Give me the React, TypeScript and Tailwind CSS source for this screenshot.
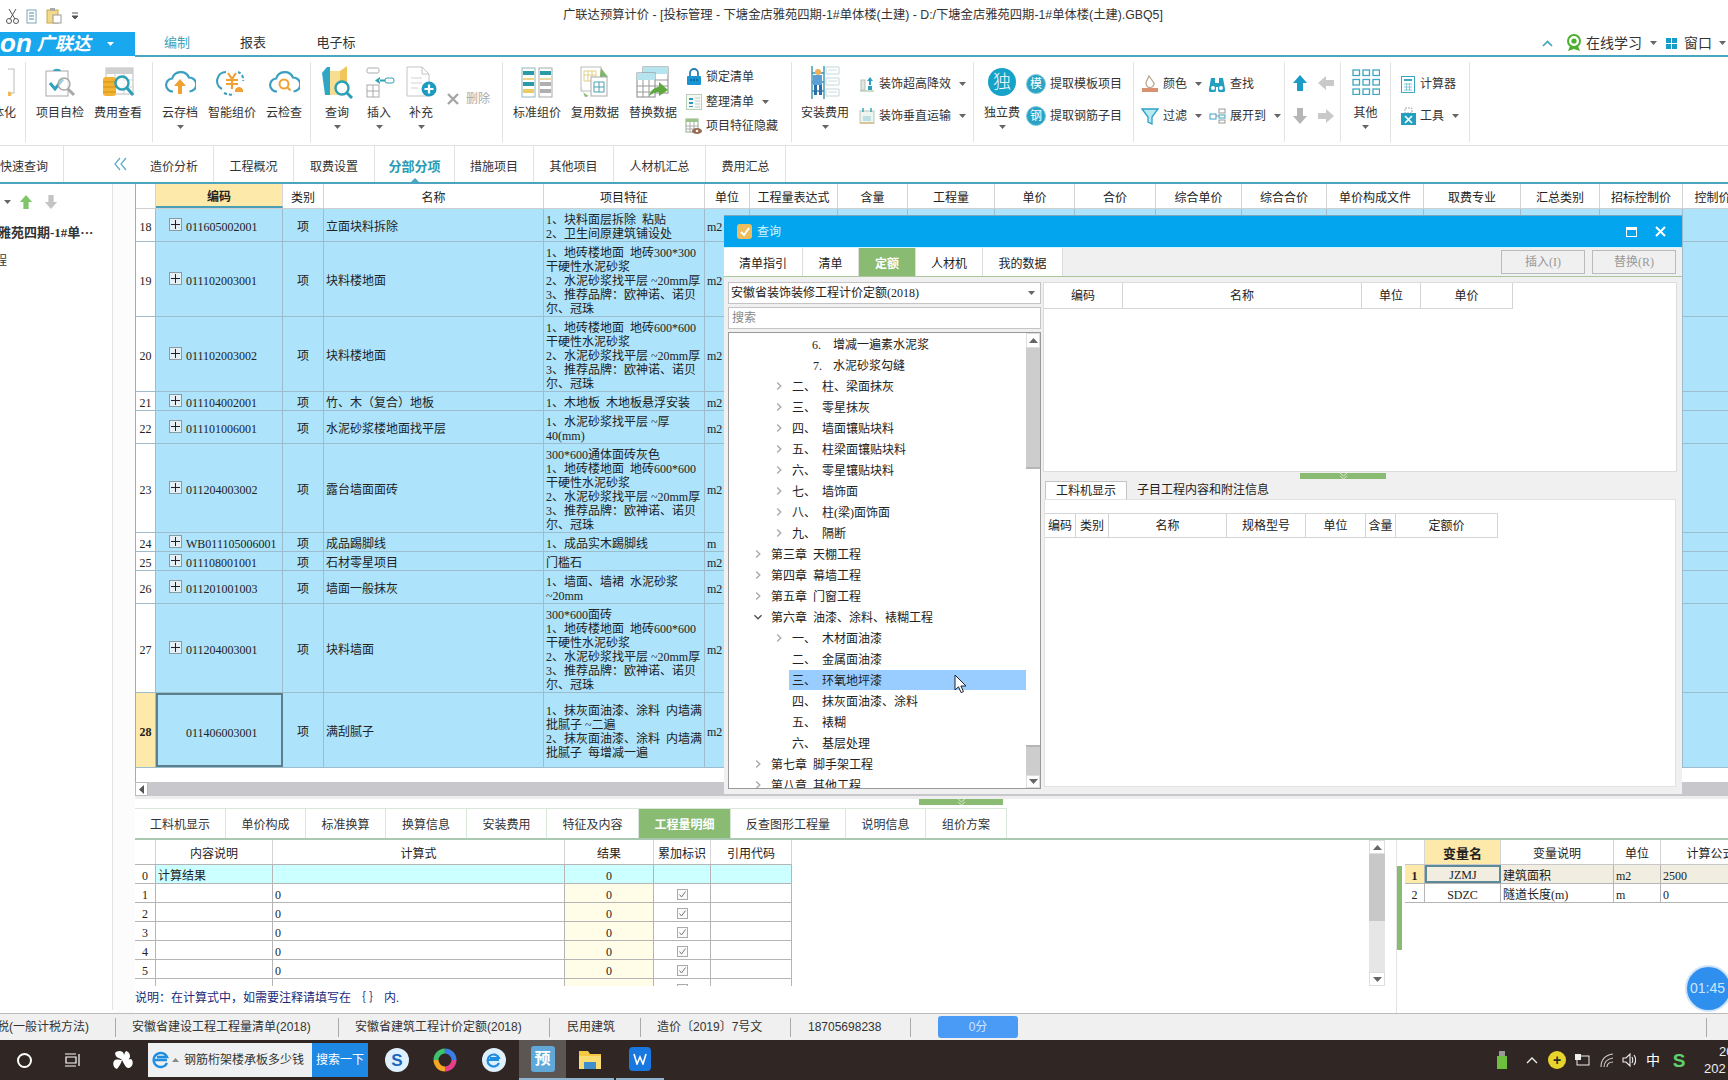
import React from "react";

const SERIF = "[font-family:'Liberation_Serif','Noto_Sans_CJK_SC',serif]";

function Caret({ className = "", color = "#666" }: { className?: string; color?: string }) {
  return (
    <svg width="7" height="4" viewBox="0 0 7 4" className={className}>
      <path d="M0 0h7L3.5 4z" fill={color} />
    </svg>
  );
}

function Svg({ w, h, children, className = "" }: { w: number; h: number; children: React.ReactNode; className?: string }) {
  return (
    <svg width={w} height={h} viewBox={`0 0 ${w} ${h}`} fill="none" className={className}>
      {children}
    </svg>
  );
}

const CLOUD = "M9 24.5a6.5 6.5 0 0 1-.8-13A9 9 0 0 1 25 10.5a7 7 0 0 1 .5 14";

const IconCheck = () => (
  <Svg w={32} h={30}>
    <rect x="2" y="4" width="22" height="25" stroke="#a9a9a9" fill="#fff" />
    <path d="M9 4c0-3 8-3 8 0z" fill="#39a5c2" />
    <path d="M6 16l5 6 8-10" stroke="#2d9fc0" strokeWidth="3" />
    <circle cx="20" cy="17" r="6" stroke="#a9a9a9" strokeWidth="1.5" fill="#ffffff88" />
    <path d="M24 22l6 6" stroke="#a9a9a9" strokeWidth="3" />
  </Svg>
);
const IconFee = () => (
  <Svg w={32} h={30}>
    <rect x="4" y="1" width="27" height="26" fill="#fff" stroke="#bdbdbd" />
    <rect x="4" y="1" width="27" height="6" fill="#d0d0d0" />
    <path d="M4 13h27M4 20h27M13 7v20M22 7v20" stroke="#cfcfcf" />
    <rect x="1" y="10" width="13" height="19" rx="3" fill="#f2b233" />
    <path d="M1 15h13M1 20h13M1 25h13" stroke="#d58f10" />
    <circle cx="20" cy="16" r="6.5" fill="#ffffffaa" stroke="#2ba0b4" strokeWidth="2.4" />
    <path d="M25 21l6 7" stroke="#2ba0b4" strokeWidth="3" />
  </Svg>
);
const IconCloudUp = () => (
  <Svg w={32} h={30}>
    <path d={CLOUD} stroke="#3c9fc0" strokeWidth="2.2" />
    <path d="M16 12l-6 7h4v8h4v-8h4z" fill="#f0a132" />
  </Svg>
);
const IconCloudYen = () => (
  <Svg w={32} h={30}>
    <path d="M6 22A9 9 0 0 1 10 5" stroke="#3c9fc0" strokeWidth="2.2" />
    <path d="M22 5a8 8 0 0 1 5 9M8 26c4 2 8 2 10 1" stroke="#3c9fc0" strokeWidth="2" strokeDasharray="3 2" />
    <path d="M12 6l4 6 4-6M10 13h12M10 17h12M16 12v10" stroke="#f0a132" strokeWidth="2.2" />
    <path d="M19 25a4 4 0 0 1 4-5 4 4 0 0 1 4 5z" fill="#f0a132" />
  </Svg>
);
const IconCloudSearch = () => (
  <Svg w={32} h={30}>
    <path d={CLOUD} stroke="#3c9fc0" strokeWidth="2.2" />
    <circle cx="16" cy="17" r="4.5" stroke="#f0a132" strokeWidth="2" />
    <path d="M19.5 20.5l3 3" stroke="#f0a132" strokeWidth="2" />
  </Svg>
);
const IconQuery = () => (
  <Svg w={34} h={34}>
    <path d="M2 8l5-6h3v28H5z" fill="#2fa7c4" />
    <path d="M10 6l10 0 0 24H10z" fill="#f6dd90" />
    <path d="M20 6l7-5v24l-7 5z" fill="#f2c55c" />
    <circle cx="22" cy="23" r="6.5" fill="#fff" stroke="#2ba0b4" strokeWidth="2.4" />
    <path d="M27 28l5 5" stroke="#2ba0b4" strokeWidth="3" />
  </Svg>
);
const IconInsert = () => (
  <Svg w={32} h={32}>
    <rect x="4" y="2" width="12" height="5" rx="1.5" stroke="#aaa" />
    <path d="M17 11l-5 3.5 5 3.5zM16 13.5h6v2h-6z" fill="#2ba0b4" />
    <rect x="22" y="12" width="9" height="5" rx="2" stroke="#2ba0b4" />
    <rect x="4" y="19" width="12" height="12" stroke="#aaa" />
    <path d="M10 19v12M4 25h12" stroke="#aaa" />
  </Svg>
);
const IconAdd = () => (
  <Svg w={32} h={32}>
    <path d="M2 1h15l7 7v22H2z" fill="#fff" stroke="#c4c4c4" />
    <path d="M17 1v7h7" stroke="#c4c4c4" />
    <path d="M6 12h11M6 17h11M6 22h7" stroke="#d3d3d3" />
    <circle cx="24" cy="23" r="7.5" fill="#1d9cc0" />
    <path d="M24 18.5v9M19.5 23h9" stroke="#fff" strokeWidth="2.2" />
  </Svg>
);
const IconStd = () => (
  <Svg w={32} h={31}>
    <rect x="1" y="1" width="13" height="29" fill="#fff" stroke="#8fb8c0" />
    <rect x="18" y="1" width="13" height="29" fill="#fff" stroke="#a9a9a9" />
    <rect x="2" y="4" width="11" height="4" fill="#2a9aa8" />
    <rect x="2" y="11" width="11" height="2" fill="#f0d684" />
    <rect x="2" y="15" width="11" height="4" fill="#2a9aa8" />
    <rect x="2" y="22" width="11" height="4" fill="#eccb62" />
    <rect x="19" y="4" width="11" height="4" fill="#2a9aa8" />
    <rect x="19" y="11" width="11" height="2" fill="#e6d9a3" />
    <rect x="19" y="15" width="11" height="4" fill="#b0b0b0" />
    <rect x="19" y="22" width="11" height="4" fill="#b0b0b0" />
  </Svg>
);
const IconReuse = () => (
  <Svg w={32} h={32}>
    <rect x="2" y="1" width="20" height="24" fill="#fff" stroke="#bbb" />
    <path d="M5 5h12v10H5zM9 5v10M13 5v10M5 9h12" stroke="#e3cf86" />
    <path d="M22 2l7 9h-4v5h-5z" fill="#7fb56c" />
    <rect x="12" y="11" width="16" height="19" fill="#fff" stroke="#aaa" />
    <path d="M15 16h10v10H15zM20 16v10M15 21h10" stroke="#4a9fb0" />
    <path d="M2 20c1 5 3 8 8 10l-4 1z" fill="#7fb56c" />
  </Svg>
);
const IconReplace = () => (
  <Svg w={34} h={32}>
    <rect x="7" y="1" width="25" height="26" fill="#fff" stroke="#888" />
    <rect x="7" y="1" width="25" height="7" fill="#b5e4ee" />
    <rect x="1" y="7" width="18" height="24" fill="#fff" stroke="#888" />
    <rect x="1" y="7" width="18" height="7" fill="#b5e4ee" />
    <path d="M1 20h18M1 26h18M7 14v17M13 14v17M19 14h13M19 20h13" stroke="#999" />
    <path d="M13 30c2-7 7-9 10-9v-5l9 8-9 6v-4c-4 0-7 2-10 4z" fill="#5fa83e" />
  </Svg>
);
const IconLock = () => (
  <Svg w={16} h={18}>
    <path d="M4 8V5a4 4 0 0 1 8 0v3" stroke="#2a7fb0" strokeWidth="1.8" />
    <rect x="1" y="8" width="14" height="9" rx="1" fill="#1894d2" />
    <path d="M4 12h8" stroke="#0e6ea0" strokeWidth="2" strokeDasharray="2 1" />
  </Svg>
);
const IconList = () => (
  <Svg w={16} h={16}>
    <rect x="0.5" y="0.5" width="15" height="15" fill="#f4f9f4" stroke="#b9cfb9" />
    <path d="M3 4h4v2H3zM3 8h4v2H3zM3 12h4v1H3z" fill="#2a9ac0" />
    <path d="M9 4h5M9 7h5M9 10h5M9 13h5" stroke="#c8c8c8" />
  </Svg>
);
const IconTableEye = () => (
  <Svg w={17} h={17}>
    <rect x="1" y="1" width="12" height="13" fill="#fff" stroke="#8fb08f" />
    <rect x="1" y="1" width="12" height="3" fill="#9cc38a" />
    <path d="M1 8h12M1 11h12M5 4v10M9 4v10" stroke="#aaa" />
    <ellipse cx="12" cy="13" rx="5" ry="3" fill="#9a6a50" />
    <circle cx="12" cy="13" r="1.3" fill="#fff" />
  </Svg>
);
const IconInstall = () => (
  <Svg w={32} h={34}>
    <path d="M3 1v33M15 1v33M3 8h12M3 17h12M3 26h12" stroke="#3a95b5" strokeWidth="1.4" />
    <circle cx="9" cy="7" r="3" fill="#f0b058" />
    <path d="M4 10h9v10H4z" fill="#5c9fd8" />
    <path d="M5 20h3v10H5zM10 20h3v10h-3z" fill="#2d6da8" />
    <path d="M17 2h13v7H17zM17 13h13v7H17zM17 24h13v7H17z" stroke="#c5d8d8" />
    <path d="M19 5h9M19 16h9M19 27h9" stroke="#cddede" />
  </Svg>
);
const IconHigh = () => (
  <Svg w={16} h={18}>
    <path d="M1 16h14" stroke="#c9ddc9" strokeWidth="2" />
    <rect x="2" y="5" width="4" height="10" fill="#dfe9df" stroke="#bbb" />
    <path d="M11 2l-3 4h2v4h2V6h2z" fill="#2d9fc0" />
    <path d="M9 11h4v4H9z" fill="#2d9fc0" />
  </Svg>
);
const IconLift = () => (
  <Svg w={16} h={18}>
    <rect x="1" y="4" width="14" height="12" fill="#eef4ee" stroke="#b9c7b9" />
    <path d="M4 1v4M12 1v4" stroke="#2d9fc0" strokeWidth="1.4" />
    <path d="M4 9h8v5H4z" fill="#bcdfe6" />
    <path d="M1 16h14" stroke="#d8c39a" strokeWidth="2" />
  </Svg>
);
const IconColor = () => (
  <Svg w={18} h={18}>
    <path d="M8 1l5 7a4 4 0 1 1-8 1c0-3 2-5 3-8z" stroke="#b9a38c" strokeWidth="1.2" fill="#fff" />
    <rect x="1" y="13" width="16" height="4" fill="#d89272" />
  </Svg>
);
const IconBinoc = () => (
  <Svg w={18} h={16}>
    <path d="M3 2h4v5h4V2h4l2 11a2.5 2.5 0 0 1-7 1v-3H8v3a2.5 2.5 0 0 1-7-1z" fill="#239fc0" />
    <circle cx="5" cy="12" r="2" fill="#fff" />
    <circle cx="13" cy="12" r="2" fill="#fff" />
  </Svg>
);
const IconFunnel = () => (
  <Svg w={18} h={17}>
    <path d="M1 1h16l-6 8v7l-4-2V9z" fill="#b8e8f2" stroke="#2da3c6" strokeWidth="1.3" />
  </Svg>
);
const IconExpand = () => (
  <Svg w={17} h={16}>
    <rect x="1" y="6" width="6" height="5" stroke="#3c9fc0" />
    <rect x="10" y="1" width="6" height="4" stroke="#999" />
    <rect x="10" y="7" width="6" height="3" stroke="#3c9fc0" />
    <rect x="10" y="12" width="6" height="3" stroke="#999" />
    <path d="M7 8h3" stroke="#999" />
  </Svg>
);
const IconArrow = ({ rot, color }: { rot: "up" | "down" | "left" | "right"; color: string }) => {
  const cls = { up: "rotate-0", down: "rotate-180", left: "-rotate-90", right: "rotate-90" }[rot];
  return (
    <svg width="16" height="16" viewBox="0 0 16 16" className={cls}>
      <path d="M8 0l7 8h-4v8H5V8H1z" fill={color} />
    </svg>
  );
};
const IconGrid = () => (
  <Svg w={28} h={26}>
    {[0, 9.5, 19].map((y) =>
      [0, 10, 20].map((x) => (
        <rect key={`${x}-${y}`} x={x + 1} y={y + 1} width="6.5" height="5.5" stroke="#3fa5c4" strokeWidth="1.3" />
      ))
    )}
  </Svg>
);
const IconCalc = () => (
  <Svg w={14} h={17}>
    <rect x="0.5" y="0.5" width="13" height="16" fill="#fff" stroke="#3fa5c4" />
    <rect x="3" y="3" width="8" height="2" fill="#3fa5c4" />
    <path d="M3 8h8M3 11h8M3 14h8M5.5 7v8M8.5 7v8" stroke="#8cc8da" />
  </Svg>
);
const IconTool = () => (
  <Svg w={15} h={18}>
    <path d="M4 1h7v5H4z" stroke="#a9a9a9" strokeDasharray="2 1" />
    <rect x="0" y="6" width="15" height="12" fill="#239fc0" />
    <path d="M4 9l7 7M11 9l-7 7" stroke="#fff" strokeWidth="1.6" />
  </Svg>
);
const CircleTxt = ({ t }: { t: string }) => (
  <div className="w-[20px] h-[20px] rounded-full bg-[#2aa2c4] border border-[#7fcadf] flex items-center justify-center text-white text-[12px] leading-none">
    {t}
  </div>
);
const IconX = () => (
  <Svg w={12} h={12}>
    <path d="M1 1l10 10M11 1L1 11" stroke="#a5a5a5" strokeWidth="2.4" />
  </Svg>
);

function Large({ w, icon, label, caret }: { w: string; icon: React.ReactNode; label: string; caret?: boolean }) {
  return (
    <div className={`${w} flex flex-col items-center`}>
      <div className="mt-[2px] h-[36px] flex items-center justify-center">{icon}</div>
      <div className="mt-[4px] h-[18px] leading-[18px] text-[12px] text-[#333] whitespace-nowrap">{label}</div>
      {caret && <Caret className="mt-[3px]" />}
    </div>
  );
}

function Small({ iconW, icon, label, caret, className = "" }: { iconW: string; icon: React.ReactNode; label: string; caret?: boolean; className?: string }) {
  return (
    <div className={`flex items-center ${className}`}>
      <div className={`${iconW} flex justify-center`}>{icon}</div>
      <span className="ml-[4px] text-[12px] text-[#333] whitespace-nowrap">{label}</span>
      {caret && <Caret className="ml-[8px]" />}
    </div>
  );
}

function Group({ w, children, className = "" }: { w: string; children: React.ReactNode; className?: string }) {
  return <div className={`${w} h-[80px] my-[5px] shrink-0 border-r border-[#e3e3e3] flex ${className}`}>{children}</div>;
}

function Ribbon() {
  return (
    <div className="h-[89px] flex border-b border-[#e2e2e2] bg-white">
      <Group w="w-[26px]">
        <div className="flex flex-col items-end w-[16px]">
          <div className="mt-[2px] h-[36px] flex items-center">
            <Svg w={8} h={28}>
              <rect x="-6" y="1" width="12" height="24" stroke="#bbb" fill="#fff" />
              <circle cx="1" cy="26" r="2.5" fill="#f0b858" />
            </Svg>
          </div>
          <div className="mt-[4px] h-[18px] leading-[18px] text-[12px] text-[#333] whitespace-nowrap">体化</div>
        </div>
      </Group>
      <Group w="w-[127px]" className="pl-[5px]">
        <Large w="w-[58px]" icon={<IconCheck />} label="项目自检" />
        <Large w="w-[58px]" icon={<IconFee />} label="费用查看" />
      </Group>
      <Group w="w-[158px]" className="pl-[1px]">
        <Large w="w-[52px]" icon={<IconCloudUp />} label="云存档" caret />
        <Large w="w-[52px]" icon={<IconCloudYen />} label="智能组价" />
        <Large w="w-[52px]" icon={<IconCloudSearch />} label="云检查" />
      </Group>
      <Group w="w-[192px]" className="pl-[5px]">
        <Large w="w-[42px]" icon={<IconQuery />} label="查询" caret />
        <Large w="w-[42px]" icon={<IconInsert />} label="插入" caret />
        <Large w="w-[42px]" icon={<IconAdd />} label="补充" caret />
        <div className="ml-[5px] mt-[30px] h-[14px] flex items-center">
          <IconX />
          <span className="ml-[7px] text-[12px] text-[#aaa]">删除</span>
        </div>
      </Group>
      <Group w="w-[289px]" className="pl-[5px]">
        <Large w="w-[58px]" icon={<IconStd />} label="标准组价" />
        <Large w="w-[58px]" icon={<IconReuse />} label="复用数据" />
        <Large w="w-[58px]" icon={<IconReplace />} label="替换数据" />
        <div className="ml-[3px] pt-[3px] flex flex-col">
          <Small iconW="w-[17px]" icon={<IconLock />} label="锁定清单" className="h-[24px]" />
          <Small iconW="w-[17px]" icon={<IconList />} label="整理清单" caret className="h-[25px]" />
          <Small iconW="w-[17px]" icon={<IconTableEye />} label="项目特征隐藏" className="h-[24px]" />
        </div>
      </Group>
      <Group w="w-[182px]" className="pl-[4px]">
        <Large w="w-[58px]" icon={<IconInstall />} label="安装费用" caret />
        <div className="ml-[5px] pt-[6px] flex flex-col">
          <Small iconW="w-[16px]" icon={<IconHigh />} label="装饰超高降效" caret className="h-[32px]" />
          <Small iconW="w-[16px]" icon={<IconLift />} label="装饰垂直运输" caret className="h-[32px]" />
        </div>
      </Group>
      <Group w="w-[160px]" className="pl-[5px]">
        <div className="w-[46px] flex flex-col items-center">
          <div className="mt-[2px] h-[36px] flex items-center">
            <div className="w-[28px] h-[28px] rounded-full bg-[#17a2c8] flex items-center justify-center text-white text-[18px] leading-none font-light">独</div>
          </div>
          <div className="mt-[4px] h-[18px] leading-[18px] text-[12px] text-[#333] whitespace-nowrap">独立费</div>
          <Caret className="mt-[3px]" />
        </div>
        <div className="ml-[1px] pt-[6px] flex flex-col">
          <Small iconW="w-[20px]" icon={<CircleTxt t="模" />} label="提取模板项目" className="h-[32px]" />
          <Small iconW="w-[20px]" icon={<CircleTxt t="钢" />} label="提取钢筋子目" className="h-[32px]" />
        </div>
      </Group>
      <Group w="w-[151px]" className="pl-[7px] pt-[6px] flex-col">
        <div className="h-[32px] flex items-center">
          <Small iconW="w-[18px]" icon={<IconColor />} label="颜色" caret className="w-[67px]" />
          <Small iconW="w-[18px]" icon={<IconBinoc />} label="查找" />
        </div>
        <div className="h-[32px] flex items-center">
          <Small iconW="w-[18px]" icon={<IconFunnel />} label="过滤" caret className="w-[67px]" />
          <Small iconW="w-[18px]" icon={<IconExpand />} label="展开到" caret />
        </div>
      </Group>
      <Group w="w-[56px]" className="pl-[2px] pt-[4px] flex-col">
        <div className="h-[33px] flex items-center">
          <div className="w-[26px] flex justify-center"><IconArrow rot="up" color="#1a9cc8" /></div>
          <div className="w-[26px] flex justify-center"><IconArrow rot="left" color="#c9c9c9" /></div>
        </div>
        <div className="h-[33px] flex items-center">
          <div className="w-[26px] flex justify-center"><IconArrow rot="down" color="#b5b5b5" /></div>
          <div className="w-[26px] flex justify-center"><IconArrow rot="right" color="#c9c9c9" /></div>
        </div>
      </Group>
      <Group w="w-[50px]">
        <Large w="w-[50px]" icon={<IconGrid />} label="其他" caret />
      </Group>
      <Group w="w-[79px]" className="pl-[9px] pt-[6px] flex-col">
        <Small iconW="w-[16px]" icon={<IconCalc />} label="计算器" className="h-[32px]" />
        <Small iconW="w-[16px]" icon={<IconTool />} label="工具" caret className="h-[32px]" />
      </Group>
    </div>
  );
}

const cols = ["w-[20px]", "w-[127px]", "w-[41px]", "w-[220px]", "w-[161px]", "w-[45px]", "w-[88px]", "w-[70px]", "w-[87px]", "w-[80px]", "w-[81px]", "w-[86px]", "w-[85px]", "w-[97px]", "w-[97px]", "w-[79px]", "w-[83px]", "w-[60px]"];
const heads = ["", "编码", "类别", "名称", "项目特征", "单位", "工程量表达式", "含量", "工程量", "单价", "合价", "综合单价", "综合合价", "单价构成文件", "取费专业", "汇总类别", "招标控制价", "控制价"];

const brickA = (s: string) => [`1、地砖楼地面  地砖${s}`, "干硬性水泥砂浆", "2、水泥砂浆找平层 ~20mm厚", "3、推荐品牌：欧神诺、诺贝", "尔、冠珠"];
const rows = [
  { n: "18", h: "h-[33px]", code: "011605002001", name: "立面块料拆除", f: ["1、块料面层拆除  粘贴", "2、卫生间原建筑铺设处"], u: "m2" },
  { n: "19", h: "h-[75px]", code: "011102003001", name: "块料楼地面", f: brickA("300*300"), u: "m2" },
  { n: "20", h: "h-[75px]", code: "011102003002", name: "块料楼地面", f: brickA("600*600"), u: "m2" },
  { n: "21", h: "h-[19px]", code: "011104002001", name: "竹、木（复合）地板", f: ["1、木地板  木地板悬浮安装"], u: "m2" },
  { n: "22", h: "h-[33px]", code: "011101006001", name: "水泥砂浆楼地面找平层", f: ["1、水泥砂浆找平层 ~厚", "40(mm)"], u: "m2" },
  { n: "23", h: "h-[89px]", code: "011204003002", name: "露台墙面面砖", f: ["300*600通体面砖灰色", ...brickA("600*600")], u: "m2" },
  { n: "24", h: "h-[19px]", code: "WB011105006001", name: "成品踢脚线", f: ["1、成品实木踢脚线"], u: "m" },
  { n: "25", h: "h-[19px]", code: "011108001001", name: "石材零星项目", f: ["门槛石"], u: "m2" },
  { n: "26", h: "h-[33px]", code: "011201001003", name: "墙面一般抹灰", f: ["1、墙面、墙裙  水泥砂浆", "~20mm"], u: "m2" },
  { n: "27", h: "h-[89px]", code: "011204003001", name: "块料墙面", f: ["300*600面砖", ...brickA("600*600")], u: "m2" },
  { n: "28", h: "h-[75px]", code: "011406003001", name: "满刮腻子", f: ["1、抹灰面油漆、涂料  内墙满", "批腻子 ~二遍", "2、抹灰面油漆、涂料  内墙满", "批腻子  每增减一遍"], u: "m2", sel: true },
];

const CELL = "border-r border-[#9dbccd] h-full flex items-center shrink-0 pt-[4px]";

function UpperTable() {
  return (
    <div className={`h-[598px] overflow-hidden border-l border-[#aaa] text-[12px] text-[#222] ${SERIF}`}>
      <div className="flex h-[25px] w-max border-b border-[#cfcfcf]">
        {heads.map((t, i) => (
          <div key={i} className={`${cols[i]} h-full shrink-0 pt-[3px] flex items-center justify-center whitespace-nowrap ${i === 1 ? "bg-[#fde9a9] font-bold border-r border-[#d5d5d5] border-b-2 border-b-[#4a9fb5]" : "border-r border-[#d5d5d5]"}`}>
            {t}
          </div>
        ))}
      </div>
      {rows.map((r) => (
        <div key={r.n} className={`flex w-max ${r.h} border-b border-[#9dbccd] bg-[#ade3fb]`}>
          <div className={`${cols[0]} ${CELL} justify-center ${r.sel ? "bg-[#fde9a9] font-bold" : "bg-white"}`}>{r.n}</div>
          <div className={`${cols[1]} h-full flex items-center shrink-0 pt-[4px] pl-[13px] ${r.sel ? "border-2 border-[#5c7f8c]" : "border-r border-[#9dbccd]"}`}>
            {r.sel ? (
              <span className="ml-[15px] mt-[1px]">{r.code}</span>
            ) : (
              <>
                <span className="w-[13px] h-[13px] -mt-[6px] shrink-0 bg-[#e4f0f5] border border-[#8a9aa5] flex items-center justify-center">
                  <Svg w={9} h={9}>
                    <path d="M4.5 0v9M0 4.5h9" stroke="#222" />
                  </Svg>
                </span>
                <span className="ml-[4px]">{r.code}</span>
              </>
            )}
          </div>
          <div className={`${cols[2]} ${CELL} justify-center`}>项</div>
          <div className={`${cols[3]} ${CELL} pl-[2px]`}>{r.name}</div>
          <div className={`${cols[4]} ${CELL} pl-[2px]`}>
            <div className="leading-[14px] whitespace-pre">
              {r.f.map((l, i) => (
                <div key={i}>{l}</div>
              ))}
            </div>
          </div>
          <div className={`${cols[5]} ${CELL} pl-[2px]`}>{r.u}</div>
          {cols.slice(6).map((c, i) => (
            <div key={i} className={`${c} ${CELL}`} />
          ))}
        </div>
      ))}
    </div>
  );
}

const lowerCols = ["w-[21px]", "w-[117px]", "w-[292px]", "w-[89px]", "w-[57px]", "w-[81px]"];
const LC = "border-r border-[#b5b5b5] h-full flex items-center shrink-0 pt-[4px]";

function Check({ checked = true }: { checked?: boolean }) {
  return (
    <span className="w-[11px] h-[11px] -mt-[2px] bg-[#fafafa] border border-[#aaa] flex items-center justify-center">
      {checked && (
        <Svg w={9} h={9}>
          <path d="M1.5 4.5l2 2.5 4-5.5" stroke="#777" strokeWidth="1" />
        </Svg>
      )}
    </span>
  );
}

function LowerTable() {
  return (
    <div className={`h-[146px] overflow-hidden text-[12px] text-[#222] ${SERIF}`}>
      <div className="flex h-[25px] border-b border-[#b5b5b5] w-max">
        {["", "内容说明", "计算式", "结果", "累加标识", "引用代码"].map((t, i) => (
          <div key={i} className={`${lowerCols[i]} h-full shrink-0 pt-[3px] border-r border-[#d5d5d5] flex items-center justify-center`}>{t}</div>
        ))}
      </div>
      <div className="flex h-[19px] w-max border-b border-[#b5b5b5] bg-[#ccffff]">
        <div className={`${lowerCols[0]} ${LC} justify-center bg-white`}>0</div>
        <div className={`${lowerCols[1]} ${LC} pl-[2px]`}>计算结果</div>
        <div className={`${lowerCols[2]} ${LC}`} />
        <div className={`${lowerCols[3]} ${LC} justify-center`}>0</div>
        <div className={`${lowerCols[4]} ${LC}`} />
        <div className={`${lowerCols[5]} ${LC}`} />
      </div>
      {["1", "2", "3", "4", "5", ""].map((n, i) => (
        <div key={i} className="flex h-[19px] w-max border-b border-[#b5b5b5]">
          <div className={`${lowerCols[0]} ${LC} justify-center`}>{n}</div>
          <div className={`${lowerCols[1]} ${LC}`} />
          <div className={`${lowerCols[2]} ${LC} pl-[2px]`}>{n && "0"}</div>
          <div className={`${lowerCols[3]} ${LC} justify-center bg-[#fffde8]`}>{n && "0"}</div>
          <div className={`${lowerCols[4]} ${LC} justify-center`}><Check /></div>
          <div className={`${lowerCols[5]} ${LC}`} />
        </div>
      ))}
    </div>
  );
}

function VarTable() {
  const vc = ["w-[20px]", "w-[76px]", "w-[113px]", "w-[47px]", "w-[100px]"];
  return (
    <div className={`text-[12px] text-[#222] ${SERIF}`}>
      <div className="flex h-[25px] w-max border-b border-[#c8c8c8]">
        {["", "变量名", "变量说明", "单位", "计算公式"].map((t, i) => (
          <div key={i} className={`${vc[i]} h-full shrink-0 pt-[3px] border-r border-[#d5d5d5] flex items-center justify-center whitespace-nowrap ${i === 1 ? "bg-[#fde9a9] font-bold text-[13px]" : ""}`}>{t}</div>
        ))}
      </div>
      <div className="flex h-[19px] w-max border-b border-[#b5b5b5] bg-[#f1ede0]">
        <div className={`${vc[0]} ${LC} justify-center bg-[#fde9a9] font-bold`}>1</div>
        <div className={`${vc[1]} h-full flex items-center shrink-0 pt-[2px] justify-center border-2 border-[#5c8a99]`}>JZMJ</div>
        <div className={`${vc[2]} ${LC} pl-[2px]`}>建筑面积</div>
        <div className={`${vc[3]} ${LC} pl-[2px]`}>m2</div>
        <div className={`${vc[4]} ${LC} pl-[2px]`}>2500</div>
      </div>
      <div className="flex h-[19px] w-max border-b border-[#b5b5b5]">
        <div className={`${vc[0]} ${LC} justify-center`}>2</div>
        <div className={`${vc[1]} ${LC} justify-center`}>SDZC</div>
        <div className={`${vc[2]} ${LC} pl-[2px]`}>隧道长度(m)</div>
        <div className={`${vc[3]} ${LC} pl-[2px]`}>m</div>
        <div className={`${vc[4]} ${LC} pl-[2px]`}>0</div>
      </div>
    </div>
  );
}

const Chev = ({ down }: { down?: boolean }) => (
  <svg width="9" height="10" viewBox="0 0 9 10" fill="none" className={down ? "rotate-90" : ""}>
    <path d="M2.5 1l4 4-4 4" stroke={down ? "#555" : "#aaa"} strokeWidth="1.6" />
  </svg>
);

type TreeRow = { pad: string; chev?: "r" | "d"; num?: string; numW?: string; t: string; hi?: boolean };
const B = "pl-[46px]";
const C = "pl-[25px]";
const D = "pl-[46px]";
const tree: TreeRow[] = [
  { pad: D, num: "6.", numW: "w-[41px] pl-[20px]", t: "增减一遍素水泥浆" },
  { pad: D, num: "7.", numW: "w-[41px] pl-[21px]", t: "水泥砂浆勾缝" },
  { pad: B, chev: "r", num: "二、", t: "柱、梁面抹灰" },
  { pad: B, chev: "r", num: "三、", t: "零星抹灰" },
  { pad: B, chev: "r", num: "四、", t: "墙面镶贴块料" },
  { pad: B, chev: "r", num: "五、", t: "柱梁面镶贴块料" },
  { pad: B, chev: "r", num: "六、", t: "零星镶贴块料" },
  { pad: B, chev: "r", num: "七、", t: "墙饰面" },
  { pad: B, chev: "r", num: "八、", t: "柱(梁)面饰面" },
  { pad: B, chev: "r", num: "九、", t: "隔断" },
  { pad: C, chev: "r", t: "第三章  天棚工程" },
  { pad: C, chev: "r", t: "第四章  幕墙工程" },
  { pad: C, chev: "r", t: "第五章  门窗工程" },
  { pad: C, chev: "d", t: "第六章  油漆、涂料、裱糊工程" },
  { pad: B, chev: "r", num: "一、", t: "木材面油漆" },
  { pad: B, num: "二、", t: "金属面油漆" },
  { pad: B, num: "三、", t: "环氧地坪漆", hi: true },
  { pad: B, num: "四、", t: "抹灰面油漆、涂料" },
  { pad: B, num: "五、", t: "裱糊" },
  { pad: B, num: "六、", t: "基层处理" },
  { pad: C, chev: "r", t: "第七章  脚手架工程" },
  { pad: C, chev: "r", t: "第八章  其他工程" },
];

function TriBtn({ up, className = "" }: { up?: boolean; className?: string }) {
  return (
    <div className={`bg-white flex items-center justify-center border border-[#ddd] ${className}`}>
      <svg width="9" height="5" viewBox="0 0 9 5" className={up ? "" : "rotate-180"}>
        <path d="M4.5 0L9 5H0z" fill="#666" />
      </svg>
    </div>
  );
}

function Dialog() {
  const tabs = [
    ["清单指引", "w-[79px]"],
    ["清单", "w-[56px]"],
    ["定额", "w-[57px]"],
    ["人材机", "w-[67px]"],
    ["我的数据", "w-[80px]"],
  ];
  return (
    <div className="absolute left-[724px] top-[215px] w-[958px] h-[579px] flex flex-col bg-[#f0f0f0] border-t border-[#7fa8c0] text-[12px] text-[#222]">
      <div className="h-[31px] bg-[#03a6ee] flex items-center shrink-0">
        <div className="ml-[13px] w-[15px] h-[15px] rounded-[3px] bg-[#f0bd5c] flex items-center justify-center">
          <Svg w={11} h={11}>
            <path d="M2 6l3 3 5-7" stroke="#fff" strokeWidth="2" />
          </Svg>
        </div>
        <span className="ml-[5px] text-[#d6f2ff]">查询</span>
        <div className="ml-auto flex items-center">
          <Svg w={11} h={10}>
            <rect x="0.5" y="0.5" width="10" height="9" stroke="#fff" />
            <rect x="0" y="0" width="11" height="3" fill="#fff" />
          </Svg>
          <Svg w={11} h={11} className="ml-[18px] mr-[16px]">
            <path d="M1 1l9 9M10 1l-9 9" stroke="#fff" strokeWidth="2" />
          </Svg>
        </div>
      </div>
      <div className="h-[30px] flex shrink-0 border-b border-[#a9c79b] border-t border-t-[#d4f3fd]">
        {tabs.map(([t, w]) => (
          <div key={t} className={`${w} pt-[3px] flex items-center justify-center border-r border-[#ddd] ${t === "定额" ? "bg-[#8abb72] text-white font-bold" : "bg-white"}`}>
            {t}
          </div>
        ))}
        <div className={`ml-auto mt-[2px] mr-[6px] flex gap-[7px] text-[#999] ${SERIF}`}>
          <div className="w-[84px] h-[24px] border border-[#bbb] flex items-center justify-center">插入(I)</div>
          <div className="w-[84px] h-[24px] border border-[#bbb] flex items-center justify-center">替换(R)</div>
        </div>
      </div>
      <div className="flex pt-[5px]">
        <div className={`ml-[4px] w-[313px] flex flex-col ${SERIF}`}>
          <div className="h-[22px] bg-white border border-[#c4c4c4] flex items-center pl-[2px]">
            安徽省装饰装修工程计价定额(2018)
            <Caret className="ml-auto mr-[5px]" />
          </div>
          <div className="mt-[3px] h-[22px] bg-white border border-[#c4c4c4] flex items-center pl-[3px] text-[#888]">搜索</div>
          <div className="mt-[3px] h-[457px] bg-white border border-[#999] flex">
            <div className="w-[297px] h-full overflow-hidden shrink-0">
              {tree.map((r, i) => (
                <div key={i} className={`h-[21px] flex items-center whitespace-pre ${r.pad}`}>
                  <span className="w-[8px] shrink-0 flex justify-center">{r.chev && <Chev down={r.chev === "d"} />}</span>
                  <div className={`relative ml-[6px] flex-1 h-[20px] pl-[3px] pt-[2px] flex items-center ${r.hi ? "bg-[#99ccff]" : ""}`}>
                    {r.num && <span className={r.numW ?? "w-[30px] shrink-0"}>{r.num}</span>}
                    <span>{r.t}</span>
                    {r.hi && (
                      <svg width="13" height="20" viewBox="0 0 13 20" className="absolute left-[165px] top-[4px]">
                        <path d="M1 1v15l3.5-3.2 2.6 5.8 2.4-1-2.6-5.6H12z" fill="#fff" stroke="#222" strokeWidth="1" />
                      </svg>
                    )}
                  </div>
                </div>
              ))}
            </div>
            <div className="w-[14px] flex flex-col shrink-0">
              <TriBtn up className="h-[15px]" />
              <div className="h-[119px] bg-[#cdcdcd]" />
              <div className="h-[280px] bg-white border-y-2 border-[#b5b5b5]" />
              <div className="h-[28px] bg-[#cdcdcd]" />
              <TriBtn className="h-[13px]" />
            </div>
          </div>
        </div>
        <div className={`ml-[2px] w-[634px] flex flex-col ${SERIF}`}>
          <div className="h-[190px] bg-white border border-[#dcdcdc]">
            <div className="flex h-[26px] w-max border-b border-[#d5d5d5]">
              {[["编码", "w-[79px]"], ["名称", "w-[239px]"], ["单位", "w-[59px]"], ["单价", "w-[92px]"]].map(([t, w]) => (
                <div key={t} className={`${w} flex items-center justify-center border-r border-[#d5d5d5]`}>{t}</div>
              ))}
            </div>
          </div>
          <div className="mt-[1px] ml-[257px] w-[86px] h-[6px] bg-[#8abb72] flex justify-center">
            <Svg w={9} h={6}>
              <path d="M1 0l3.5 3L8 0M1 3l3.5 3L8 3" stroke="#d5e8cb" />
            </Svg>
          </div>
          <div className="mt-[2px] h-[18px] flex">
            <div className="ml-[2px] w-[82px] h-[18px] bg-white border border-b-0 border-[#c4c4c4] flex items-center justify-center">工料机显示</div>
            <div className="ml-[10px] flex items-center">子目工程内容和附注信息</div>
          </div>
          <div className="ml-[1px] w-[632px] h-[288px] bg-white border border-[#e2e2e2] pt-[13px]">
            <div className="flex h-[25px] w-max border-y border-[#d5d5d5] bg-white">
              {[["编码", "w-[31px]"], ["类别", "w-[33px]"], ["名称", "w-[118px]"], ["规格型号", "w-[79px]"], ["单位", "w-[60px]"], ["含量", "w-[30px]"], ["定额价", "w-[102px]"]].map(([t, w]) => (
                <div key={t} className={`${w} flex items-center justify-center border-r border-[#d5d5d5]`}>{t}</div>
              ))}
            </div>
          </div>
        </div>
      </div>
    </div>
  );
}

function Taskbar() {
  return (
    <div className="h-[40px] shrink-0 flex items-center bg-[#302724] text-white">
      <div className="w-[48px] flex justify-center">
        <div className="w-[15px] h-[15px] rounded-full border-2 border-white" />
      </div>
      <div className="w-[48px] flex justify-center">
        <Svg w={16} h={16}>
          <path d="M1 2h11M1 14h11M2 5h10v6H2zM15 2v12" stroke="#fff" strokeWidth="1.2" />
        </Svg>
      </div>
      <div className="w-[52px] flex justify-center">
        <Svg w={22} h={22}>
          <path d="M11 11C8 8 5 10 4 4c2-3 9-3 9 2 0 2-1 3-2 5zM11 11c3-3 5 0 9-1 3 2 2 9-3 9-2 0-4-4-6-8zM11 11c-1 4-3 6-5 9-4-1-5-7-2-9 2-1 5 0 7 0zM11 11c2-3 2-7 4-9 4 1 5 6 3 8-2 1-5 1-7 1z" fill="#fff" />
        </Svg>
      </div>
      <div className="w-[164px] h-[34px] bg-[#eef0f2] flex items-center text-[#333] text-[12px]">
        <Svg w={18} h={18} className="ml-[4px]">
          <path d="M15 12a7 7 0 1 1 0-6H5M3 9h12" stroke="#1f8de0" strokeWidth="2.4" />
        </Svg>
        <Caret className="ml-[2px] rotate-180" color="#888" />
        <span className="ml-[5px] whitespace-nowrap">钢筋桁架楼承板多少钱</span>
      </div>
      <div className="w-[56px] h-[34px] bg-[#1e88e5] flex items-center justify-center text-[12px]">搜索一下</div>
      <div className="ml-[5px] w-[48px] flex justify-center">
        <div className="w-[24px] h-[24px] rounded-full bg-[#dff0ff] flex items-center justify-center text-[#1a66c0] text-[17px] leading-none font-bold">S</div>
      </div>
      <div className="w-[48px] flex justify-center">
        <svg width="24" height="24" viewBox="0 0 24 24" fill="none">
          <circle cx="12" cy="12" r="9" stroke="#e83e8c" strokeWidth="5" strokeDasharray="14 43" />
          <circle cx="12" cy="12" r="9" stroke="#f5a623" strokeWidth="5" strokeDasharray="14 43" strokeDashoffset="-14" />
          <circle cx="12" cy="12" r="9" stroke="#3ec46d" strokeWidth="5" strokeDasharray="14 43" strokeDashoffset="-28" />
          <circle cx="12" cy="12" r="9" stroke="#3a7de8" strokeWidth="5" strokeDasharray="15 43" strokeDashoffset="-42" />
        </svg>
      </div>
      <div className="w-[50px] flex justify-center">
        <div className="w-[24px] h-[24px] rounded-full bg-[#dff0ff] flex items-center justify-center">
          <Svg w={16} h={16}>
            <path d="M13 11a6 6 0 1 1 0-5H4M2 8h11" stroke="#1f8de0" strokeWidth="2.2" />
          </Svg>
        </div>
      </div>
      <div className="w-[47px] h-full bg-[#5b5654] flex items-center justify-center border-b-2 border-[#8fb4cf]">
        <div className="w-[24px] h-[26px] rounded-[3px] bg-[#5fa8d8] flex items-center justify-center text-[16px] leading-none font-bold">预</div>
      </div>
      <div className="w-[48px] h-full flex items-center justify-center border-b-2 border-[#8fb4cf]">
        <Svg w={24} h={24}>
          <path d="M1 4h9l2 3h11v15H1z" fill="#f5c843" />
          <rect x="1" y="9" width="22" height="13" fill="#fbdc73" />
          <rect x="6" y="15" width="12" height="7" fill="#3f8fcf" />
        </Svg>
      </div>
      <div className="ml-[2px] w-[48px] h-full flex items-center justify-center border-b-2 border-[#8fb4cf]">
        <div className="w-[22px] h-[24px] rounded-[4px] bg-[#1878e0] flex items-center justify-center">
          <Svg w={14} h={12}>
            <path d="M1 1l3 10 3-7 3 7 3-10" stroke="#fff" strokeWidth="1.6" />
          </Svg>
        </div>
      </div>
      <div className="ml-auto flex items-center">
        <Svg w={10} h={20}>
          <rect x="2" y="1" width="6" height="5" fill="#999" />
          <rect x="0" y="6" width="10" height="13" fill="#6fbf3f" />
        </Svg>
        <Svg w={12} h={8} className="ml-[19px]">
          <path d="M1 7l5-5 5 5" stroke="#eee" strokeWidth="1.3" />
        </Svg>
        <div className="ml-[10px] w-[18px] h-[18px] rounded-full bg-[#e8d52c] flex items-center justify-center text-[#2a2a2a] text-[14px] font-bold leading-none">+</div>
        <Svg w={16} h={14} className="ml-[8px]">
          <rect x="3" y="3" width="12" height="9" stroke="#eee" fill="none" />
          <rect x="1" y="1" width="6" height="6" fill="#eee" />
        </Svg>
        <Svg w={14} h={16} className="ml-[10px]">
          <path d="M1 15C1 7 6 3 13 2M4 15c0-5 3-8 9-9M7 15c0-3 2-5 6-5" stroke="#ccc" strokeWidth="1.1" />
        </Svg>
        <Svg w={14} h={16} className="ml-[8px]">
          <path d="M1 6h3l4-4v12l-4-4H1zM10 5c1 2 1 4 0 6M12 3c2 3 2 7 0 10" stroke="#eee" strokeWidth="1.1" />
        </Svg>
        <span className="ml-[10px] text-[14px] leading-none w-[14px]">中</span>
        <span className="ml-[11px] w-[16px] h-[20px] flex items-center justify-center text-[#5fd06a] text-[19px] font-bold leading-none">S</span>
        <div className="ml-[17px] w-[24px] h-[40px] flex flex-col justify-between py-[3px] text-[13px] leading-[17px] text-[#eee]">
          <span className="pl-[15px]">20</span>
          <span>202</span>
        </div>
      </div>
    </div>
  );
}

export default function App() {
  const mainTabs = [
    ["造价分析", "w-[79px]"],
    ["工程概况", "w-[80px]"],
    ["取费设置", "w-[81px]"],
    ["分部分项", "w-[80px]"],
    ["措施项目", "w-[79px]"],
    ["其他项目", "w-[80px]"],
    ["人材机汇总", "w-[92px]"],
    ["费用汇总", "w-[80px]"],
  ];
  const lowerTabs = [
    ["工料机显示", "w-[91px]"],
    ["单价构成", "w-[80px]"],
    ["标准换算", "w-[80px]"],
    ["换算信息", "w-[81px]"],
    ["安装费用", "w-[80px]"],
    ["特征及内容", "w-[92px]"],
    ["工程量明细", "w-[92px]"],
    ["反查图形工程量", "w-[115px]"],
    ["说明信息", "w-[80px]"],
    ["组价方案", "w-[81px]"],
  ];
  return (
    <div className="relative w-[1728px] h-[1080px] overflow-hidden bg-white flex flex-col text-[12px] text-[#333] [font-family:'Liberation_Sans','Noto_Sans_CJK_SC',sans-serif]">
      {/* title bar */}
      <div className="h-[31px] shrink-0 flex items-center">
        <div className="w-[563px] flex items-center pl-[5px] gap-[6px]">
          <Svg w={15} h={16}>
            <circle cx="4" cy="13" r="2.5" stroke="#555" />
            <circle cx="11" cy="13" r="2.5" stroke="#555" />
            <path d="M5 11l6-10M10 11L4 1" stroke="#555" />
          </Svg>
          <Svg w={14} h={16}>
            <rect x="1" y="2" width="9" height="13" fill="#fff" stroke="#7aa8b8" />
            <path d="M3 5h5M3 8h5M3 11h5" stroke="#4a90a8" />
          </Svg>
          <Svg w={16} h={17}>
            <rect x="1" y="3" width="11" height="13" fill="#f3d98a" stroke="#c8a84e" />
            <rect x="7" y="8" width="8" height="8" fill="#fff" stroke="#999" />
            <rect x="4" y="1" width="5" height="3" fill="#aaa" />
          </Svg>
          <Svg w={6} h={8} className="ml-[4px]">
            <path d="M0 1h6M0 4h6l-3 3z" stroke="#555" fill="#555" />
          </Svg>
        </div>
        <span className="text-[12.3px] text-[#333] whitespace-nowrap">广联达预算计价 - [投标管理 - 下塘金店雅苑四期-1#单体楼(土建) - D:/下塘金店雅苑四期-1#单体楼(土建).GBQ5]</span>
      </div>
      {/* menu row */}
      <div className="h-[26px] shrink-0 flex">
        <div className="w-[135px] h-[24px] mt-[1px] bg-[#19a8ee] flex items-center text-white italic font-bold">
          <span className="text-[26px] leading-none -mt-[2px]">on</span>
          <span className="ml-[5px] text-[18px] leading-none">广联达</span>
          <Caret className="ml-[16px]" color="#fff" />
        </div>
        <div className="flex-1 flex items-stretch border-b-2 border-[#4ba5bf] text-[13px]">
          <div className="ml-[4px] w-[76px] flex items-center justify-center text-[#3ea3bd] border-b-2 border-[#4ba5bf] -mb-[2px]">编制</div>
          <div className="w-[76px] flex items-center justify-center text-[#333]">报表</div>
          <div className="w-[90px] flex items-center justify-center text-[#333]">电子标</div>
          <div className="ml-auto flex items-center text-[#333]">
            <Svg w={11} h={7}>
              <path d="M1 6l4.5-4.5L10 6" stroke="#3ea3bd" strokeWidth="1.6" />
            </Svg>
            <Svg w={16} h={18} className="ml-[13px]">
              <circle cx="8" cy="7" r="6" stroke="#4caf2e" strokeWidth="2" />
              <circle cx="8" cy="7" r="2.6" fill="#4caf2e" />
              <path d="M4 12l-2 5 6-2 6 2-2-5" fill="#4caf2e" />
            </Svg>
            <span className="ml-[4px] text-[14px]">在线学习</span>
            <Caret className="ml-[8px]" />
            <Svg w={11} h={11} className="ml-[9px]">
              <path d="M0 0h5v5H0zM6 0h5v5H6zM0 6h5v5H0zM6 6h5v5H6z" fill="#1a9cc8" />
            </Svg>
            <span className="ml-[7px] text-[14px]">窗口</span>
            <Caret className="ml-[7px] mr-[2px]" />
          </div>
        </div>
      </div>
      <Ribbon />
      {/* page tabs */}
      <div className="h-[38px] shrink-0 flex border-b-2 border-[#4ba5bf]">
        <div className="w-[135px] flex">
          <div className="w-[64px] pt-[5px] border-r border-[#e2e2e2] flex items-center whitespace-nowrap text-[#333]">快速查询</div>
          <div className="ml-[50px] flex items-center">
            <Svg w={14} h={14}>
              <path d="M6 1L1 7l5 6M12 1L7 7l5 6" stroke="#5aa9c4" strokeWidth="1.2" />
            </Svg>
          </div>
        </div>
        {mainTabs.map(([t, w]) => (
          <div key={t} className={`relative ${w} pt-[5px] flex items-center justify-center border-r border-[#e2e2e2] ${t === "分部分项" ? "text-[#2a9bb5] font-bold text-[13px]" : "text-[#333]"}`}>
            {t}
            {t === "分部分项" && (
              <Svg w={8} h={4} className="absolute bottom-0 left-[36px]">
                <path d="M4 0l4 4H0z" fill="#4ba5bf" />
              </Svg>
            )}
          </div>
        ))}
      </div>
      {/* body */}
      <div className="flex-1 min-h-0 flex">
        <div className="w-[113px] h-[826px] shrink-0 border-r border-[#e4e4e4] overflow-hidden">
          <div className="h-[36px] flex items-center">
            <Caret className="ml-[4px]" />
            <div className="ml-[8px] w-[14px] flex justify-center"><IconArrow rot="up" color="#7fc66a" /></div>
            <div className="ml-[11px] w-[14px] flex justify-center"><IconArrow rot="down" color="#c4c4c4" /></div>
          </div>
          <div className={`mt-[3px] h-[20px] -ml-[2px] flex items-center whitespace-nowrap font-bold text-[13px] text-[#333] ${SERIF}`}>雅苑四期-1#单···</div>
          <div className={`mt-[8px] h-[20px] -ml-[5px] flex items-center text-[#333] ${SERIF}`}>程</div>
        </div>
        <div className="w-[22px] shrink-0 bg-[#fcfcfc]" />
        <div className="flex-1 min-w-0 flex flex-col">
          <UpperTable />
          <div className="h-[14px] shrink-0 bg-[#c8c8cc] flex">
            <div className="w-[13px] bg-white border border-[#bbb] flex items-center justify-center">
              <Svg w={5} h={9}>
                <path d="M0 4.5L5 0v9z" fill="#555" />
              </Svg>
            </div>
          </div>
          <div className="h-[3px] shrink-0 bg-[#eeeeee]" />
          <div className="h-[6px] shrink-0 ml-[784px] w-[84px] bg-[#8abb72] flex justify-center">
            <Svg w={9} h={6}>
              <path d="M1 0l3.5 3L8 0M1 3l3.5 3L8 3" stroke="#d5e8cb" />
            </Svg>
          </div>
          <div className="h-[3px] shrink-0" />
          <div className="h-[32px] shrink-0 flex border-b-2 border-[#a8c8b0]">
            {lowerTabs.map(([t, w]) => (
              <div key={t} className={`${w} pt-[2px] flex items-center justify-center border-r border-t border-[#dbe6db] ${t === "工程量明细" ? "bg-[#8abb72] text-white font-bold" : "text-[#333]"}`}>
                {t}
              </div>
            ))}
          </div>
          <div className="flex-1 min-h-0 flex">
            <div className="w-[1234px] shrink-0 flex flex-col">
              <LowerTable />
              <div className={`mt-[3px] text-[#1a2a78] whitespace-pre ${SERIF}`}>说明：在计算式中，如需要注释请填写在 ｛ ｝ 内.</div>
            </div>
            <div className="w-[16px] h-[146px] shrink-0 bg-[#e6e6e6] flex flex-col">
              <TriBtn up className="h-[14px]" />
              <div className="h-[67px] bg-[#c8c8c8]" />
              <div className="flex-1" />
              <TriBtn className="h-[14px]" />
            </div>
            <div className="ml-[11px] w-[9px] shrink-0 border-l border-[#e4e4e4] pt-[26px]">
              <div className="w-[5px] h-[84px] bg-[#8abb72]" />
            </div>
            <div className="flex-1 min-w-0 overflow-hidden">
              <VarTable />
            </div>
          </div>
        </div>
      </div>
      {/* status bar */}
      <div className="h-[27px] shrink-0 bg-[#f0f0f0] border-t border-[#bbb] flex items-center text-[12px] text-[#333]">
        <div className="w-[116px] h-[19px] border-r border-[#aaa] flex items-center justify-end pr-[26px] whitespace-nowrap">税(一般计税方法)</div>
        <div className="w-[223px] h-[19px] border-r border-[#aaa] flex items-center pl-[16px] whitespace-nowrap">安徽省建设工程工程量清单(2018)</div>
        <div className="w-[211px] h-[19px] border-r border-[#aaa] flex items-center pl-[16px] whitespace-nowrap">安徽省建筑工程计价定额(2018)</div>
        <div className="w-[91px] h-[19px] border-r border-[#aaa] flex items-center pl-[17px] whitespace-nowrap">民用建筑</div>
        <div className="w-[150px] h-[19px] border-r border-[#aaa] flex items-center pl-[16px] whitespace-nowrap">造价〔2019〕7号文</div>
        <div className="w-[120px] h-[19px] border-r border-[#aaa] flex items-center pl-[17px] whitespace-nowrap">18705698238</div>
        <div className="ml-[27px] w-[80px] h-[22px] rounded-[3px] bg-[#4a9bf5] text-[#cfe6ff] flex items-center justify-center">0分</div>
        <div className="ml-[688px] w-px h-[19px] bg-[#aaa]" />
      </div>
      <Taskbar />
      <Dialog />
      <div className="absolute left-[1685px] top-[965px] w-[47px] h-[47px] rounded-full bg-[#2f8fef] border-2 border-[#cfe4fa] flex items-center pl-[3px] text-[#cfe6ff] text-[14px] whitespace-nowrap">01:45</div>
    </div>
  );
}
